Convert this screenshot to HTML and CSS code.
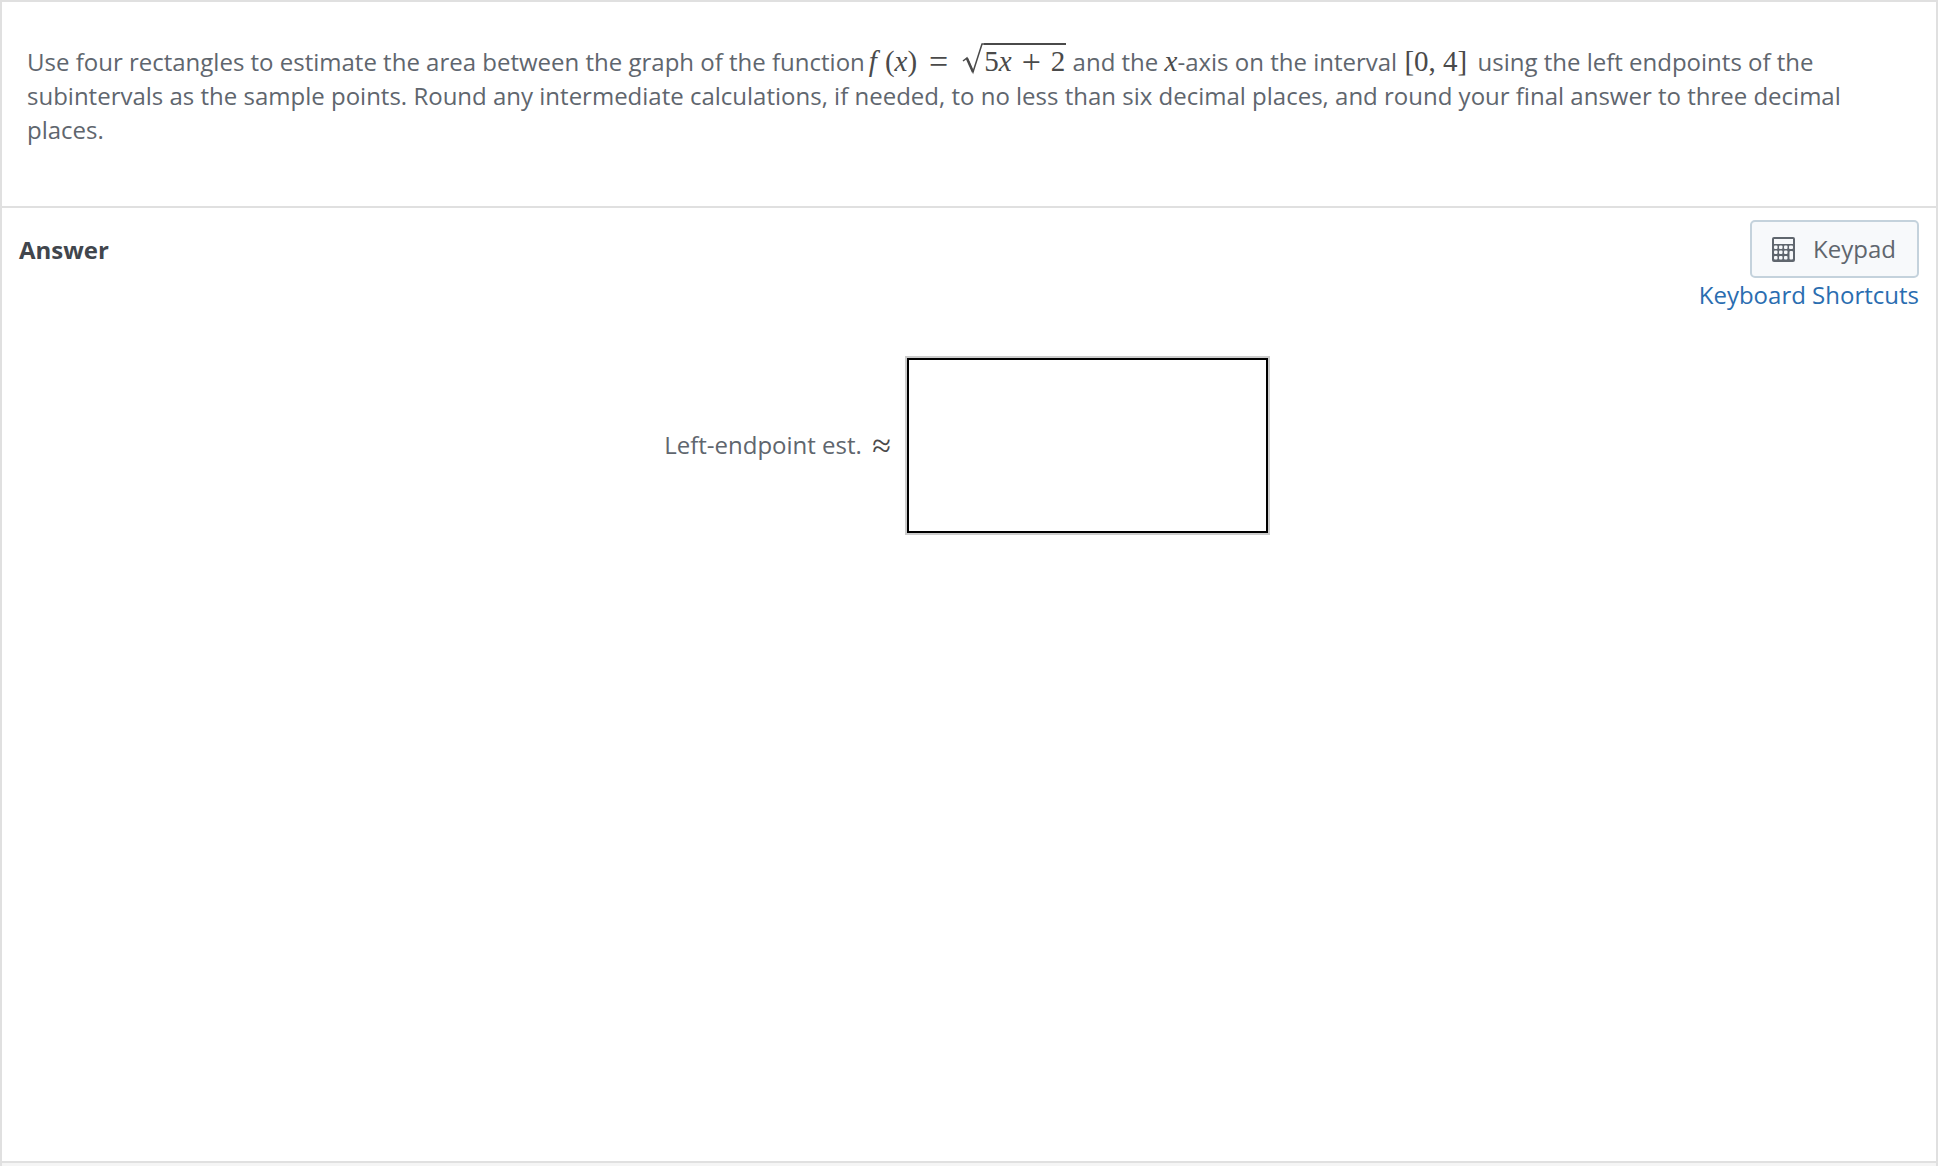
FILE: index.html
```html
<!DOCTYPE html>
<html lang="en">
<head>
  <meta charset="UTF-8">
  <meta name="viewport" content="width=device-width, initial-scale=1.0">
  <title>Left-endpoint estimate</title>
  <link rel="stylesheet" href="styles.css">
</head>
<body>
  <main class="card">
    <section class="question">
      <p>Use four rectangles to estimate the area between the graph of the function<span class="math func"><i class="fn">f</i>(<i>x</i>)<span class="rel">=</span><svg class="radical" viewBox="0 0 22 32" aria-hidden="true"><path d="M1 18 L5 15 L11 29 L20 1 H22" fill="none" stroke="currentColor" stroke-width="1.5"/><path d="M5 15.5 L11 29" stroke="currentColor" stroke-width="2.5"/></svg><span class="radicand">5<i>x</i><span class="op">+</span>2</span></span> and the <span class="math"><i>x</i></span>-axis on the interval <span class="math interval">[0, 4]</span> using the left endpoints of the subintervals as the sample points. Round any intermediate calculations, if needed, to no less than six decimal places, and round your final answer to three decimal places.</p>
    </section>

    <section class="answer">
      <header class="answer-head">
        <h2>Answer</h2>
        <div class="tools">
          <button type="button" class="keypad">
            <svg class="keypad-icon" viewBox="0 0 23 25" aria-hidden="true">
              <rect x="0" y="0" width="23" height="25" rx="2" fill="#5f666e"/>
              <rect x="2" y="2" width="19" height="5" fill="#f7f9fb"/>
              <g fill="#f7f9fb">
                <rect x="2" y="8.500" width="3.500" height="3.500" rx="1"/><rect x="7" y="8.500" width="3.500" height="3.500" rx="1"/><rect x="12" y="8.500" width="3.500" height="3.500" rx="1"/><rect x="17" y="8.500" width="4" height="3.500" rx="1"/>
                <rect x="2" y="13.500" width="3.500" height="3.500" rx="1"/><rect x="7" y="13.500" width="3.500" height="3.500" rx="1"/><rect x="12" y="13.500" width="3.500" height="3.500" rx="1"/>
                <rect x="2" y="19" width="3.500" height="3.500" rx="1"/><rect x="7" y="19" width="3.500" height="3.500" rx="1"/><rect x="12" y="19" width="3.500" height="3.500" rx="1"/>
                <rect x="17.500" y="14" width="3.500" height="8.500" rx="1"/>
              </g>
            </svg>
            Keypad
          </button>
          <a href="#">Keyboard Shortcuts</a>
        </div>
      </header>

      <div class="estimate">
        <label for="estimate">Left-endpoint est. <span class="math approx">≈</span></label>
        <textarea id="estimate"></textarea>
      </div>
    </section>
  </main>
</body>
</html>
```

FILE: styles.css
```css
:root {
  --text-color: #5f666e;
  --math-color: #4a4a4a;
  --line-color: #e0e0e0;
  --link-color: #2a6db0;
}
* { box-sizing: border-box; }
body {
  margin: 0;
  min-height: 100vh;
  display: flex;
  flex-direction: column;
  padding-bottom: 3px;
  background: #f5f5f5;
  border: 2px solid var(--line-color);
  border-bottom: none;
  color: var(--text-color);
  font-family: "Open Sans", sans-serif;
  font-size: 24px;
  line-height: 34px;
}
.card {
  flex: 1;
  display: flex;
  flex-direction: column;
  background: #fff;
  border-bottom: 2px solid var(--line-color);
}
.question {
  padding: 41px 26px 59px 25px;
  border-bottom: 2px solid var(--line-color);
}
.question p { margin: 0; }

/* math */
.math {
  color: var(--math-color);
  font-family: "Liberation Serif", serif;
  font-size: 29px;
  line-height: 1;
  white-space: nowrap;
}
.func { margin-left: 4px; }
.fn { margin-right: 8px; }
.rel, .op {
  font-size: 34px;
  vertical-align: -2px;
}
.rel { margin: 0 14px 0 12px; }
.op { margin: 0 10px; }
.radical {
  width: 22px;
  height: 32px;
  margin-bottom: -4px;
  vertical-align: baseline;
}
.radicand {
  padding: 2px 1px 0 0;
  background: linear-gradient(currentColor, currentColor) left top / 100% 2px no-repeat;
}
.interval { margin: 0 4px 0 1px; }
.approx {
  margin-left: 4px;
  font-size: 34px;
  vertical-align: -3px;
}

/* answer area */
.answer { flex: 1; }
.answer-head {
  display: flex;
  justify-content: space-between;
  align-items: flex-start;
  padding: 12px 17px 0;
}
h2 {
  margin: 13px 0 0;
  color: #41464d;
  font-size: 24px;
  font-weight: 700;
}
.tools {
  display: flex;
  flex-direction: column;
  align-items: flex-end;
}
.keypad {
  display: flex;
  align-items: center;
  gap: 18px;
  padding: 10px 21px 10px 20px;
  background: #f7f9fb;
  border: 2px solid #c4d2dc;
  border-radius: 5px;
  color: var(--text-color);
  font: inherit;
  cursor: pointer;
}
.keypad-icon {
  width: 23px;
  height: 25px;
}
.tools a {
  color: var(--link-color);
  text-decoration: none;
}
.estimate {
  display: flex;
  justify-content: center;
  align-items: center;
  gap: 14px;
  margin-top: 44px;
  padding-right: 4px;
}
textarea {
  display: block;
  width: 365px;
  height: 179px;
  padding: 8px;
  background: #fff;
  border: 2px solid #ccc;
  outline: 2px solid #000;
  outline-offset: -4px;
  color: inherit;
  font: inherit;
  resize: none;
}
```
